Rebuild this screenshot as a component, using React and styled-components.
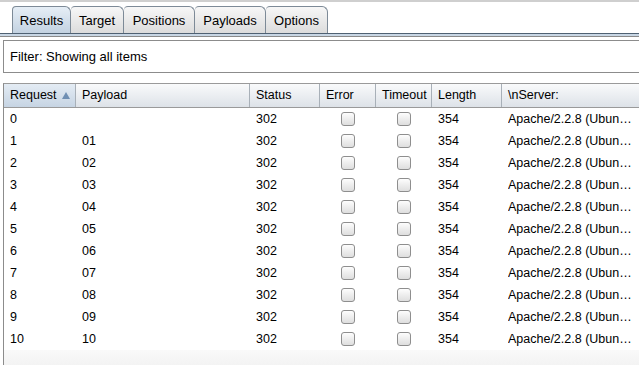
import React from "react";
import styled, { createGlobalStyle } from "styled-components";

const Global = createGlobalStyle`
  html, body {
    margin: 0;
    padding: 0;
    background: #ffffff;
    overflow: hidden;
  }
  body {
    font-family: "Liberation Sans", Arial, sans-serif;
    font-size: 12px;
    color: #000;
  }
`;

const columns = [
  { key: "request", label: "Request", width: 72, sorted: true },
  { key: "payload", label: "Payload", width: 174 },
  { key: "status", label: "Status", width: 70 },
  { key: "error", label: "Error", width: 56 },
  { key: "timeout", label: "Timeout", width: 56 },
  { key: "length", label: "Length", width: 70 },
  { key: "server", label: "\\nServer:", width: 140 },
];

const gridTemplate = columns.map((c) => `${c.width}px`).join(" ");

const rows = Array.from({ length: 11 }, (_, i) => ({
  request: String(i),
  payload: i === 0 ? "" : String(i).padStart(2, "0"),
  status: "302",
  length: "354",
  server: "Apache/2.2.8 (Ubuntu) DAV/2",
}));

const tabs = [
  { label: "Results", width: 59 },
  { label: "Target", width: 53 },
  { label: "Positions", width: 71 },
  { label: "Payloads", width: 71 },
  { label: "Options", width: 62 },
];

const Page = styled.div`
  width: 639px;
  height: 365px;
  display: flex;
  flex-direction: column;
  border-top: 2px solid #cfcfcf;
  box-sizing: border-box;
`;

const TabStrip = styled.div`
  display: flex;
  padding: 4px 0 0 12px;
  height: 27px;
`;

const Tab = styled.div`
  display: flex;
  align-items: center;
  justify-content: center;
  width: ${({ $w }) => $w}px;
  height: 27px;
  box-sizing: border-box;
  border: 1px solid #7d8a97;
  border-bottom: none;
  border-left: ${({ $first }) => ($first ? "1px solid #7d8a97" : "none")};
  border-radius: 4px 6px 0 0;
  font-size: 13px;
  background: ${({ $active }) =>
    $active
      ? "linear-gradient(#e6eef6, #c3d2e1)"
      : "linear-gradient(#f7f7f7, #dcdcdc)"};
`;

const PanelEdge = styled.div`
  height: 2px;
  border-top: 1px solid #4f6173;
  border-bottom: 1px solid #8a8a8a;
  background: #c8d6e4;
`;

const Content = styled.div`
  flex: 1;
  display: flex;
  flex-direction: column;
  padding: 3px 0 0 3px;
  min-height: 0;
`;

const FilterBox = styled.div`
  height: 33px;
  box-sizing: border-box;
  border: 1px solid #8c8c8c;
  border-right: none;
  display: flex;
  align-items: center;
  padding-left: 6px;
  font-size: 13px;
`;

const Table = styled.div`
  margin-top: 10px;
  flex: 1;
  border-left: 1px solid #8c8c8c;
  border-top: 1px solid #9a9a9a;
  background: linear-gradient(#ffffff 90%, #f3f3f3);
  overflow: hidden;
`;

const HeaderRow = styled.div`
  display: grid;
  grid-template-columns: ${gridTemplate};
  height: 23px;
  border-bottom: 1px solid #9a9a9a;
  background: linear-gradient(#f9fafb, #dde2e8);
`;

const HeaderCell = styled.div`
  display: flex;
  align-items: center;
  padding: 0 0 1px 6px;
  border-right: 1px solid #a8b0b8;
  white-space: nowrap;
  overflow: hidden;
  font-size: 12.5px;
  background: ${({ $sorted }) =>
    $sorted ? "linear-gradient(#e4ecf4, #c6d4e3)" : "transparent"};
`;

const SortArrow = styled.span`
  margin-left: 5px;
  width: 0;
  height: 0;
  border-left: 4px solid transparent;
  border-right: 4px solid transparent;
  border-bottom: 7px solid #6f8fb3;
`;

const Row = styled.div`
  display: grid;
  grid-template-columns: ${gridTemplate};
  height: 22px;
  background: #ffffff;
`;

const Cell = styled.div`
  display: flex;
  align-items: center;
  justify-content: ${({ $center }) => ($center ? "center" : "flex-start")};
  padding-left: ${({ $center }) => ($center ? "0" : "6px")};
  white-space: nowrap;
  overflow: hidden;
  font-size: 12.5px;
`;

const Ellipsis = styled.span`
  overflow: hidden;
  text-overflow: ellipsis;
  white-space: nowrap;
  max-width: 124px;
`;

const Check = styled.span`
  width: 12px;
  height: 12px;
  border: 1px solid #8e8e8e;
  border-radius: 3px;
  background: linear-gradient(#fdfdfd, #dedede);
  box-sizing: content-box;
`;

export default function App() {
  return (
    <>
      <Global />
      <Page>
        <TabStrip>
          {tabs.map((t, i) => (
            <Tab key={t.label} $w={t.width} $first={i === 0} $active={i === 0}>
              {t.label}
            </Tab>
          ))}
        </TabStrip>
        <PanelEdge />
        <Content>
          <FilterBox>Filter: Showing all items</FilterBox>
          <Table>
            <HeaderRow>
              {columns.map((c) => (
                <HeaderCell key={c.key} $sorted={c.sorted}>
                  {c.label}
                  {c.sorted && <SortArrow />}
                </HeaderCell>
              ))}
            </HeaderRow>
            {rows.map((r) => (
              <Row key={r.request}>
                <Cell>{r.request}</Cell>
                <Cell>{r.payload}</Cell>
                <Cell>{r.status}</Cell>
                <Cell $center>
                  <Check />
                </Cell>
                <Cell $center>
                  <Check />
                </Cell>
                <Cell>{r.length}</Cell>
                <Cell>
                  <Ellipsis>{r.server}</Ellipsis>
                </Cell>
              </Row>
            ))}
          </Table>
        </Content>
      </Page>
    </>
  );
}
